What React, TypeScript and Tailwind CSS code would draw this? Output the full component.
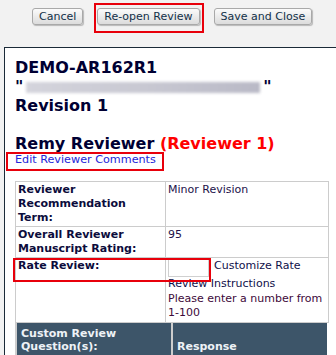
import React from 'react';

const Button = ({ label, marked }: { label: string; marked?: boolean }) => (
    <div className="relative flex">
        <button className="h-[17px] rounded-[3px] border border-[#a9a9a9] bg-gradient-to-b from-[#fbfbfb] to-[#dcdcdc] px-[6px] text-[11px] leading-[13px] text-[#123149] shadow-[1px_1px_1px_#b8b8b8]">
            {label}
        </button>
        {marked && <span className="pointer-events-none absolute -top-[5px] -bottom-[8px] -left-[3px] -right-[4px] border-2 border-[#e8000b]" />}
    </div>
);

const Row = ({ label, children }: { label: string; children: React.ReactNode }) => (
    <tr>
        <td className="w-[150px] border border-[#cccccc] px-[2px] py-[1px] align-top font-bold text-[#0c0c3c]">{label}</td>
        <td className="border border-[#cccccc] px-[2px] py-[1px] align-top text-[#23124a]">{children}</td>
    </tr>
);

export default function App() {
    return (
        <div className="min-h-screen bg-[#f2f2f2] font-['DejaVu_Sans',sans-serif]">
            <div className="flex h-[47px] items-start gap-[14px] pl-[32px] pt-[8px]">
                <Button label="Cancel" />
                <Button label="Re-open Review" marked />
                <Button label="Save and Close" />
            </div>

            <div className="ml-[4px] min-h-[308px] border-t border-l border-[#1b2a38] bg-white px-[10px] pt-[10px]">
                <div className="text-[16px] font-bold leading-[19px] text-[#000033]">
                    <div>DEMO-AR162R1</div>
                    <div>
                        "<span className="mx-[3px] inline-block h-[11px] w-[234px] bg-gradient-to-r from-[#d4d4dc] via-[#c8c8d2] to-[#b9b9c6] align-[-1px] blur-[1.5px]" />"
                    </div>
                    <div>Revision 1</div>
                </div>

                <div className="mt-[20px] text-[16px] font-bold leading-[18px] text-[#000033]">
                    Remy Reviewer <span className="text-[#ff0000]">(Reviewer 1)</span>
                </div>
                <div className="text-[11.2px] leading-[13px]">
                    <a href="#" className="relative inline-block text-[#2424d8]">
                        Edit Reviewer Comments
                        <span className="pointer-events-none absolute -top-[1px] -bottom-[5px] -left-[9px] -right-[8px] border-2 border-[#e8000b]" />
                    </a>
                </div>

                <div className="relative mt-[15px] w-[314px]">
                    <table className="w-full border-collapse text-[11px] leading-[14px]">
                        <tbody>
                            <Row label="Reviewer Recommendation Term:">Minor Revision</Row>
                            <Row label="Overall Reviewer Manuscript Rating:">95</Row>
                            <Row label="Rate Review:">
                                <div className="leading-[14.5px]">
                                    <input type="text" className="h-[18px] w-[41px] border border-[#d0d0d0] align-top" />
                                    <span className="ml-[5px] text-[#10104a]">Customize Rate Review Instructions</span>
                                    <div className="text-[#3e0a3a]">Please enter a number from 1-100</div>
                                </div>
                            </Row>
                        </tbody>
                    </table>
                    <span className="pointer-events-none absolute top-[77px] left-[-2px] h-[24px] w-[198px] border-2 border-[#e8000b]" />
                </div>

                <div className="grid w-[312px] grid-cols-[154px_154px] gap-x-[2px] bg-[#cdcdcd] pl-[2px] text-[11px] font-bold leading-[13px] text-[#eef2f6]">
                    <div className="bg-[#3d5569] px-[4px] py-[4px]">Custom Review Question(s):</div>
                    <div className="flex items-end bg-[#3d5569] px-[4px] py-[4px]">Response</div>
                </div>
            </div>
        </div>
    );
}
